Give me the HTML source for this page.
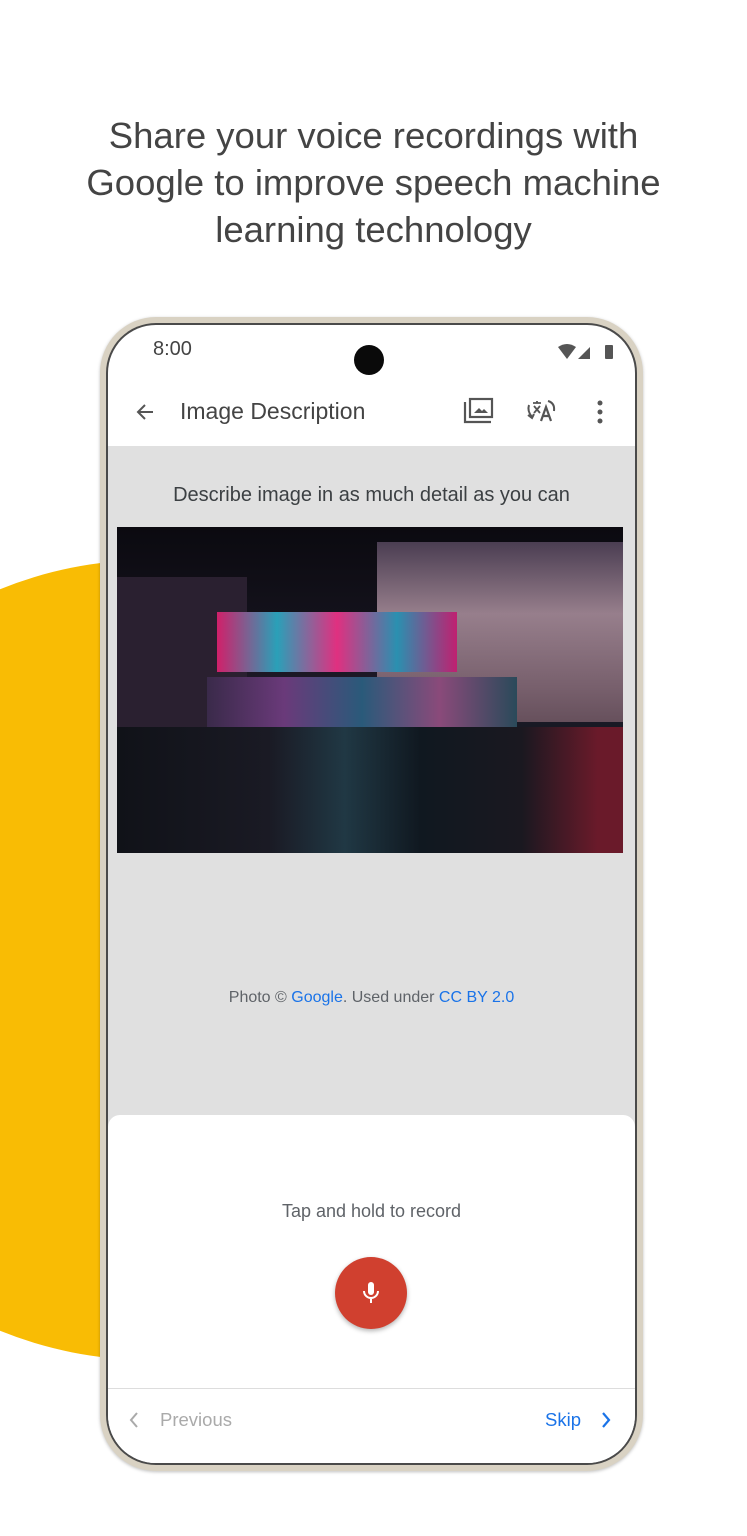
<!DOCTYPE html>
<html><head><meta charset="utf-8"><style>
*{margin:0;padding:0;box-sizing:border-box}
body{width:747px;height:1536px;background:#fff;position:relative;overflow:hidden;font-family:"Liberation Sans",sans-serif}
.title{position:absolute;top:112px;left:0;width:747px;text-align:center;font-size:36.5px;line-height:47px;color:#444}
.yc{position:absolute;left:-250px;top:560px;width:800px;height:800px;border-radius:50%;background:#f9bc04}
.frame{position:absolute;left:100px;top:317px;width:543px;height:1154px;border-radius:56px;background:#d9d2c3;box-shadow:0 1px 3px rgba(0,0,0,.25)}
.screen{position:absolute;left:106px;top:323px;width:531px;height:1142px;border-radius:50px;background:#4a4a4a;overflow:hidden}
.in{position:absolute;left:2px;top:2px;width:527px;height:1138px;border-radius:48px;background:#fff;overflow:hidden}
.gray{position:absolute;left:0;top:121px;width:527px;height:700px;background:#e0e0e0}
.t{position:absolute;color:#3c4043;white-space:nowrap}
</style></head><body>
<div class="title">Share your voice recordings with<br>Google to improve speech machine<br>learning technology</div>
<div class="yc"></div>
<div class="frame"></div>
<div class="screen"><div class="in">
 <div class="t" style="left:45px;top:13px;font-size:20px;color:#444">8:00</div>
 <div style="position:absolute;left:246px;top:20px;width:30px;height:30px;border-radius:50%;background:#0a0a0a"></div>
 <svg style="position:absolute;left:448px;top:18px" width="60" height="18" viewBox="0 0 60 18"><path d="M2 4 Q11 -2 20 4 L11 16Z" fill="#555"/><path d="M34 4 L34 16 L22 16Z" fill="#555"/><rect x="49" y="2" width="8" height="14" rx="1" fill="#555"/></svg>
 <svg style="position:absolute;left:25px;top:75px" width="24" height="24" viewBox="0 0 24 24"><path d="M20 12H5M12 5l-7 7 7 7" stroke="#555" stroke-width="2" fill="none"/></svg>
 <div class="t" style="left:72px;top:73px;font-size:23px;color:#444">Image Description</div>
 <svg style="position:absolute;left:355px;top:72px" width="32" height="28" viewBox="0 0 32 28"><path d="M2 5v20h26" stroke="#555" stroke-width="2.2" fill="none"/><rect x="7" y="2" width="22" height="18" stroke="#555" stroke-width="2.2" fill="none"/><path d="M11 16l5-5 3 3 2-2 4 4z" fill="#555"/></svg>
 <svg style="position:absolute;left:416px;top:72px" width="34" height="28" viewBox="0 0 34 28"><path d="M5 8 Q3 14 8 20" stroke="#555" stroke-width="2" fill="none"/><path d="M4 18l4 3 2-4" stroke="#555" stroke-width="2" fill="none"/><path d="M9 6h8M13 4v2M10 9l6 7M16 9l-6 7" stroke="#555" stroke-width="1.8" fill="none"/><path d="M17 24l5-14 5 14M19 19h6" stroke="#555" stroke-width="2.2" fill="none"/><path d="M24 4 Q31 6 30 14" stroke="#555" stroke-width="2" fill="none"/></svg>
 <svg style="position:absolute;left:488px;top:75px" width="8" height="24"><circle cx="4" cy="3" r="2.5" fill="#555"/><circle cx="4" cy="12" r="2.5" fill="#555"/><circle cx="4" cy="21" r="2.5" fill="#555"/></svg>
 <div class="gray">
  <div class="t" style="left:0;width:527px;text-align:center;top:38px;font-size:20px;color:#3c4043">Describe image in as much detail as you can</div>
  <div style="position:absolute;left:9px;top:81px;width:506px;height:326px;background:linear-gradient(180deg,#0b0a10 0%,#14121c 30%,#1f1a28 50%,#101820 75%,#0a0e14 100%);overflow:hidden">
   <div style="position:absolute;left:260px;top:15px;width:246px;height:180px;background:linear-gradient(180deg,#5a4a62,#b89aa8 40%,#7a5e6a);opacity:.8"></div>
   <div style="position:absolute;left:0;top:50px;width:130px;height:150px;background:#2a2030"></div>
   <div style="position:absolute;left:100px;top:85px;width:240px;height:60px;background:linear-gradient(90deg,#d0206a,#2aa0b8,#e03080,#2a90b0,#c02070)"></div>
   <div style="position:absolute;left:90px;top:150px;width:310px;height:80px;background:linear-gradient(90deg,#3a2a4a,#6a3a7a,#2a5a7a,#8a4a7a,#2a4a5a)"></div>
   <div style="position:absolute;left:0;top:200px;width:506px;height:126px;background:linear-gradient(90deg,#101218,#1a1a24 30%,#203844 45%,#101820 60%,#1a1820 80%,#6a1a2a 95%)"></div>
  </div>
  <div class="t" style="left:0;width:527px;text-align:center;top:543px;font-size:16px;color:#5f6368">Photo © <span style="color:#1a73e8">Google</span>. Used under <span style="color:#1a73e8">CC BY 2.0</span></div>
 </div>
 <div style="position:absolute;left:0;top:790px;width:527px;height:360px;background:#fff;border-radius:12px 12px 0 0"></div>
 <div class="t" style="left:0;width:527px;text-align:center;top:876px;font-size:18px;color:#5f6368">Tap and hold to record</div>
 <div style="position:absolute;left:227px;top:932px;width:72px;height:72px;border-radius:50%;background:#d0402f;box-shadow:0 2px 5px rgba(0,0,0,.3)"></div>
 <svg style="position:absolute;left:253px;top:956px" width="20" height="24" viewBox="0 0 20 24"><rect x="7" y="1" width="6" height="13" rx="3" fill="#fff"/><path d="M3 10a7 7 0 0 0 14 0M10 17v5" stroke="#fff" stroke-width="2" fill="none"/></svg>
 <div style="position:absolute;left:0;top:1063px;width:527px;height:1px;background:#ddd"></div>
 <svg style="position:absolute;left:20px;top:1086px" width="12" height="18"><path d="M9 2L3 9l6 7" stroke="#aaa" stroke-width="2" fill="none"/></svg>
 <div class="t" style="left:52px;top:1084px;font-size:18.5px;color:#aaa">Previous</div>
 <div class="t" style="left:437px;top:1084px;font-size:18.5px;color:#1a73e8">Skip</div>
 <svg style="position:absolute;left:492px;top:1086px" width="12" height="18"><path d="M3 2l6 7-6 7" stroke="#1a73e8" stroke-width="2.2" fill="none"/></svg>
</div></div>
</body></html>
